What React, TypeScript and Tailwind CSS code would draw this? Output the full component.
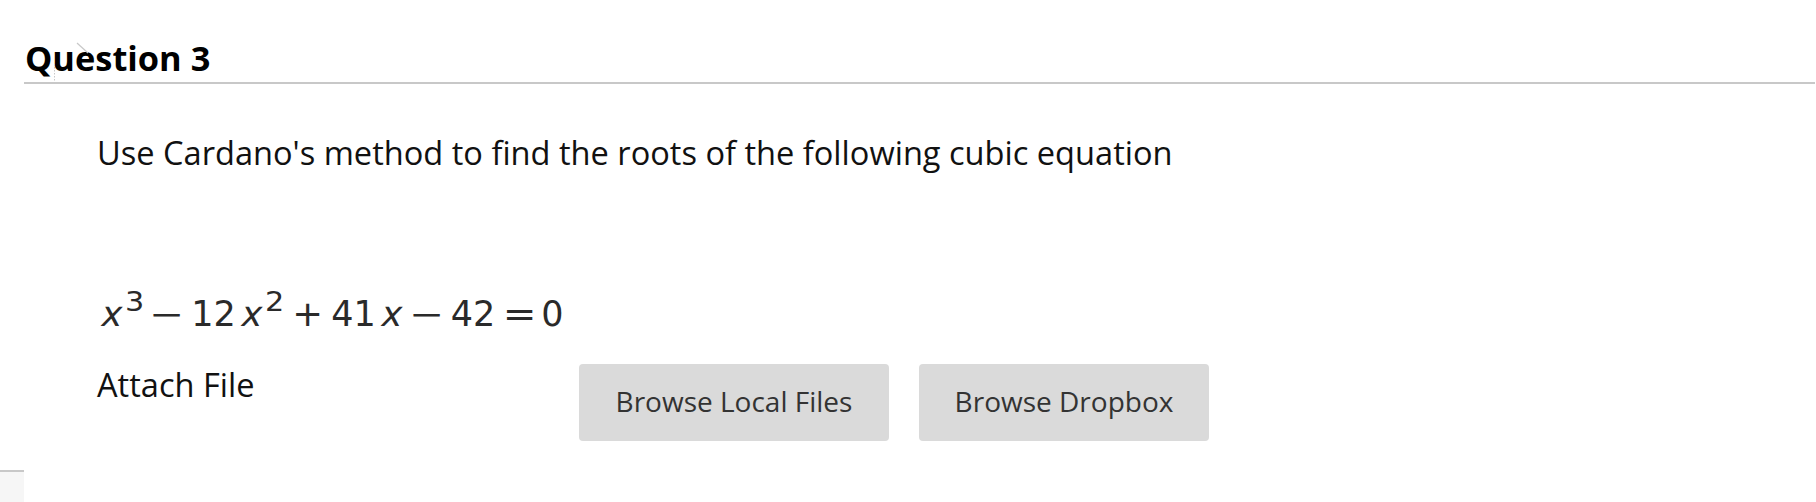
import React from "react";

const openSans = { fontFamily: '"Open Sans", "Liberation Sans", sans-serif' };
const dejavu = { fontFamily: '"DejaVu Sans", Verdana, sans-serif' };

function X({ w }: { w: string }) {
  return (
    <span className={`inline-block text-center ${w}`}>
      <span className="inline-block -skew-x-12">x</span>
    </span>
  );
}

export default function App() {
  return (
    <div className="relative w-[1816px] h-[502px] bg-white overflow-hidden" style={openSans}>
      <div className="pl-[24px] pr-px">
        <h2 className="pt-[38px] pl-px text-[34.4px] leading-[40px] font-bold text-black">Question 3</h2>
        <div className="mt-[4px] h-[2px] bg-[#c8c8c8]" />
      </div>

      <div className="pl-[97px]">
        <p className="mt-[49px] text-[32.6px] leading-[40px] text-[#111]">
          Use Cardano's method to find the roots of the following cubic equation
        </p>
        <div className="mt-[119px]">
          <div
            className="flex items-baseline text-[35px] leading-[44px] text-[#2a2a2a] pl-[3px] whitespace-nowrap"
            style={dejavu}
          >
            <X w="w-[24px]" />
            <span className="inline-block w-[22px] text-center relative -top-[15px] text-[27px] leading-none"><span className="inline-block scale-x-[1.12]">3</span></span>
            <span className="inline-block w-[42px] text-center"><span className="inline-block scale-x-[1.2] scale-y-[0.8]">−</span></span>
            <span className="inline-block w-[51px] text-center">12</span>
            <X w="w-[27px]" />
            <span className="inline-block w-[18px] text-center relative -top-[15px] text-[27px] leading-none"><span className="inline-block scale-x-[1.12]">2</span></span>
            <span className="inline-block w-[47px] text-center"><span className="inline-block scale-x-[1.05]">+</span></span>
            <span className="inline-block w-[45px] text-center">41</span>
            <X w="w-[33px]" />
            <span className="inline-block w-[36px] text-center"><span className="inline-block scale-x-[1.2] scale-y-[0.8]">−</span></span>
            <span className="inline-block w-[56px] text-center">42</span>
            <span className="inline-block w-[37px] text-center"><span className="inline-block scale-x-[1.15]">=</span></span>
            <span className="inline-block w-[29px] text-center">0</span>
          </div>
        </div>
        <div className="mt-[28px] flex items-start">
          <div className="w-[482px] mt-px text-[32.6px] leading-[40px] text-[#111]">Attach File</div>
          <div className="flex gap-[30px]">
            <button className="h-[77px] w-[310px] rounded-[4px] bg-[#dadada] text-[28px] leading-[40px] text-[#333] pb-[3px]">
              Browse Local Files
            </button>
            <button className="h-[77px] w-[290px] rounded-[4px] bg-[#dadada] text-[28px] leading-[40px] text-[#333] pb-[3px]">
              Browse Dropbox
            </button>
          </div>
        </div>
      </div>

      <div className="absolute left-0 top-[470px] w-[24px]">
        <div className="h-[2px] bg-[#c8c8c8]" />
        <div className="h-[30px] bg-[#f6f6f6]" />
      </div>

      <svg className="absolute left-0 top-0 pointer-events-none" width="120" height="90">
        <line x1="77" y1="43" x2="88" y2="53" stroke="#c8c8c8" strokeWidth="1.2" />
        <line x1="54.5" y1="64" x2="54.5" y2="82" stroke="#c8c8c8" strokeWidth="1" strokeDasharray="1.5 1.5" />
      </svg>
    </div>
  );
}
